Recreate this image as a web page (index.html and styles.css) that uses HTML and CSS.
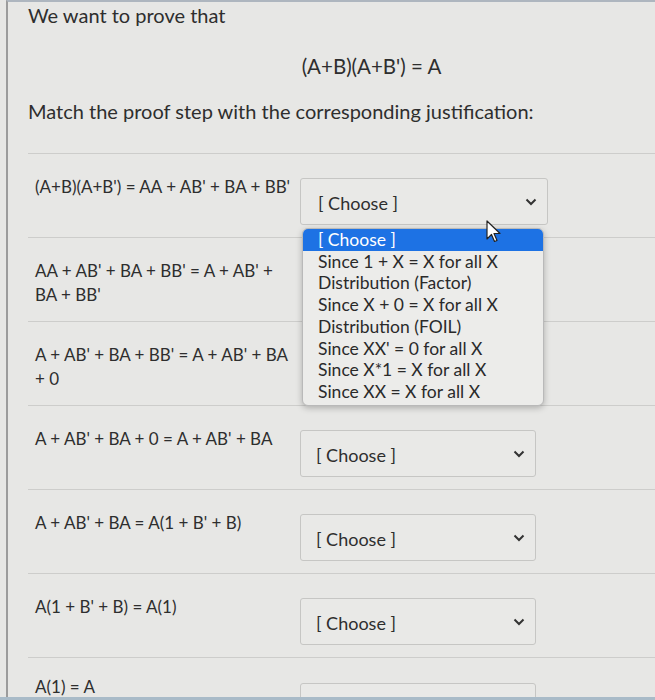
FILE: index.html
```html
<!DOCTYPE html>
<html lang="en">
<head>
<meta charset="utf-8">
<title>Proof matching</title>
<link rel="stylesheet" href="styles.css">
</head>
<body>
<div class="frame">
  <div class="content">
    <p class="intro">We want to prove that</p>
    <p class="formula">(A+B)(A+B') = A</p>
    <p class="intro match">Match the proof step with the corresponding justification:</p>

    <div class="rows">
      <div class="row">
        <div class="step">(A+B)(A+B') = AA + AB' + BA + BB'</div>
        <div class="answer">
          <div class="select first"><span>[ Choose ]</span><svg class="chev" width="12" height="8" viewBox="0 0 12 8"><path d="M1.5 1.5 L6 6 L10.5 1.5" fill="none" stroke="#333" stroke-width="2"/></svg></div>
          <ul class="menu">
            <li class="sel">[ Choose ]</li>
            <li>Since 1 + X = X for all X</li>
            <li>Distribution (Factor)</li>
            <li>Since X + 0 = X for all X</li>
            <li>Distribution (FOIL)</li>
            <li>Since XX' = 0 for all X</li>
            <li>Since X*1 = X for all X</li>
            <li>Since XX = X for all X</li>
          </ul>
          <svg class="cursor" width="16" height="24" viewBox="0 0 16 24"><path d="M1 1 L1 19 L5.5 14.5 L8.5 21.5 L11 20.5 L8 13.5 L14 13.5 Z" fill="#fff" stroke="#222" stroke-width="1.2" stroke-linejoin="round"/></svg>
        </div>
      </div>
      <div class="row">
        <div class="step">AA + AB' + BA + BB' = A + AB' + BA + BB'</div>
        <div class="answer"></div>
      </div>
      <div class="row">
        <div class="step">A + AB' + BA + BB' = A + AB' + BA + 0</div>
        <div class="answer"></div>
      </div>
      <div class="row">
        <div class="step">A + AB' + BA + 0 = A + AB' + BA</div>
        <div class="answer">
          <div class="select"><span>[ Choose ]</span><svg class="chev" width="12" height="8" viewBox="0 0 12 8"><path d="M1.5 1.5 L6 6 L10.5 1.5" fill="none" stroke="#333" stroke-width="2"/></svg></div>
        </div>
      </div>
      <div class="row">
        <div class="step">A + AB' + BA = A(1 + B' + B)</div>
        <div class="answer">
          <div class="select"><span>[ Choose ]</span><svg class="chev" width="12" height="8" viewBox="0 0 12 8"><path d="M1.5 1.5 L6 6 L10.5 1.5" fill="none" stroke="#333" stroke-width="2"/></svg></div>
        </div>
      </div>
      <div class="row">
        <div class="step">A(1 + B' + B) = A(1)</div>
        <div class="answer">
          <div class="select"><span>[ Choose ]</span><svg class="chev" width="12" height="8" viewBox="0 0 12 8"><path d="M1.5 1.5 L6 6 L10.5 1.5" fill="none" stroke="#333" stroke-width="2"/></svg></div>
        </div>
      </div>
      <div class="row last">
        <div class="step">A(1) = A</div>
        <div class="answer">
          <div class="select"><span>[ Choose ]</span><svg class="chev" width="12" height="8" viewBox="0 0 12 8"><path d="M1.5 1.5 L6 6 L10.5 1.5" fill="none" stroke="#333" stroke-width="2"/></svg></div>
        </div>
      </div>
    </div>
  </div>
</div>
<div class="bottom-strip"></div>
</body>
</html>
```

FILE: styles.css
```css
html, body {
  margin: 0;
  padding: 0;
  height: 700px;
  overflow: hidden;
  background: #e7e7e5;
}
body {
  font-family: Lato, "Open Sans", sans-serif;
  color: #2e2e2e;
  position: relative;
}
.frame {
  margin-left: 6px;
  border-left: 2px solid #9c9c9c;
  border-top: 2px solid #aeb6bf;
  height: 700px;
  box-sizing: border-box;
  overflow: hidden;
}
.content {
  padding-left: 20px;
}
.intro {
  margin: 0;
  font-size: 20px;
  line-height: 26px;
}
.formula {
  margin: 25px 0 0 0;
  font-size: 20.5px;
  line-height: 26px;
  text-align: center;
  padding-left: 60px;
}
.match {
  margin-top: 19px;
}
.rows {
  margin-top: 29px;
}
.row {
  display: grid;
  grid-template-columns: 262px 250px;
  column-gap: 3px;
  border-top: 1px solid #cdcdcb;
  padding: 21px 0 12px 7px;
  min-height: 50px;
}
.row.last {
  padding-top: 17px;
}
.row.last .select {
  margin-top: 8px;
}
.step {
  font-size: 17px;
  line-height: 24px;
}
.answer {
  position: relative;
}
.select {
  margin-top: 3px;
  height: 47px;
  width: 236px;
  box-sizing: border-box;
  border: 1px solid #c6c6c4;
  border-radius: 3px;
  background: #e9e9e7;
  display: flex;
  align-items: center;
  justify-content: space-between;
  padding: 0 10px 0 15px;
  font-size: 18px;
}
.select.first {
  width: 248px;
  padding-left: 17px;
}
.select span {
  padding-top: 2px;
}
.menu {
  position: absolute;
  left: 2px;
  top: 53px;
  width: 240px;
  margin: 0;
  padding: 0 0 2px 0;
  list-style: none;
  background: #ececea;
  border: 1px solid #b9b9b9;
  border-radius: 6px;
  box-shadow: 0 2px 6px rgba(0,0,0,0.25);
  font-size: 17.5px;
  line-height: 21.7px;
  z-index: 2;
  overflow: hidden;
}
.menu li {
  padding-left: 15px;
  color: #2a2a2a;
}
.menu li.sel {
  background: #1d72e4;
  color: #fff;
}
.cursor {
  position: absolute;
  left: 186px;
  top: 45px;
  z-index: 3;
}
.bottom-strip {
  position: absolute;
  left: 0;
  bottom: 0;
  width: 100%;
  height: 3px;
  background: #a9bbc8;
}
```
